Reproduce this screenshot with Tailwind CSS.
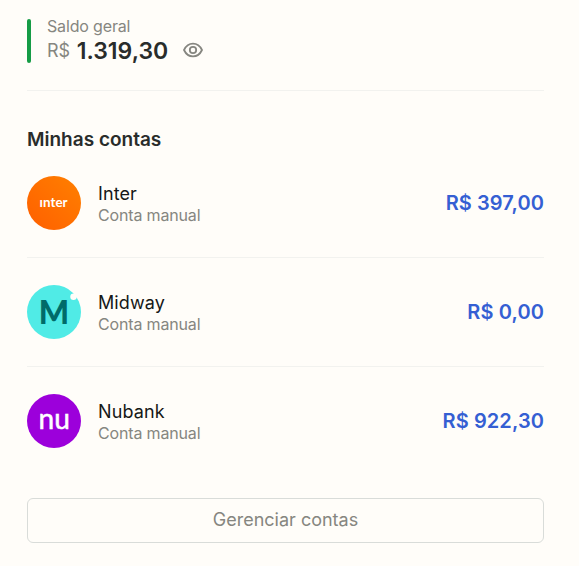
<!DOCTYPE html>
<html lang="pt-BR">

<head>
  <meta charset="UTF-8">
  <meta name="viewport" content="width=device-width, initial-scale=1.0">
  <title>Minhas contas</title>
  <script src="https://cdn.jsdelivr.net/npm/@tailwindcss/browser@4"></script>
</head>

<body class="bg-[#fffdf9] font-['Inter',sans-serif] min-h-screen">

  <main class="pl-[27px] pr-[35px] pt-[19px]">

    <!-- Balance -->
    <section class="flex h-[72px] border-b border-[#f2f2ef]">
      <div class="w-1 h-11 rounded-xs bg-[#169c46]"></div>
      <div class="ml-4">
        <p class="text-base leading-[15px] tracking-[-0.16px] text-[#868680]">Saldo geral</p>
        <div class="flex items-center h-[33px]">
          <span class="text-lg tracking-[-0.2px] text-[#868680]">R$</span>
          <span class="ml-[7px] text-[23px] leading-8 font-semibold text-[#292c2b]">1.319,30</span>
          <button class="ml-[15px]" aria-label="Ocultar saldo">
            <svg class="w-5 h-4 block -mt-[2px]" viewBox="0 0 20 16" fill="none" stroke="#868680" stroke-width="1.8">
              <path d="M1 8C3 3.8 6.2 1.6 10 1.6S17 3.8 19 8c-2 4.2-5.2 6.4-9 6.4S3 12.2 1 8Z" stroke-linejoin="round" />
              <circle cx="10" cy="8" r="3.2" />
            </svg>
          </button>
        </div>
      </div>
    </section>

    <!-- Accounts -->
    <h2 class="mt-[35px] text-[19px] leading-7 font-semibold text-[#292c2b]">Minhas contas</h2>

    <ul class="-mt-[5px]">
      <li class="flex items-center h-[109px] border-b border-[#f2f2ef]">
        <svg class="w-[54px] h-[54px]" viewBox="0 0 54 54">
          <defs>
            <linearGradient id="orange" x1="0" y1="1" x2="1" y2="0">
              <stop offset="0" stop-color="#ff5f00" />
              <stop offset="1" stop-color="#ff8000" />
            </linearGradient>
          </defs>
          <circle cx="27" cy="27" r="27" fill="url(#orange)" />
          <text x="12.6" y="31" font-family="Lato" font-size="13" font-weight="700" fill="#fff" textLength="28" lengthAdjust="spacingAndGlyphs">ınter</text>
        </svg>
        <div class="ml-[17px] pt-[3px] flex-1">
          <p class="text-lg leading-[22px] tracking-[0.1px] text-[#161817]">Inter</p>
          <p class="text-base leading-[21px] tracking-[-0.16px] text-[#868680]">Conta manual</p>
        </div>
        <span class="text-xl font-semibold tracking-[0.1px] text-[#355fd3]">R$ 397,00</span>
      </li>
      <li class="flex items-center h-[109px] border-b border-[#f2f2ef]">
        <svg class="w-[54px] h-[54px]" viewBox="0 0 54 54">
          <circle cx="27" cy="27" r="27" fill="#50ebe6" />
          <circle cx="46.5" cy="11.8" r="3.2" fill="#fffdf9" />
          <circle cx="50.5" cy="10" r="2.6" fill="#fffdf9" />
          <text x="11.8" y="39" font-family="Lato" font-size="33" font-weight="900" fill="#006b69" textLength="30.4" lengthAdjust="spacingAndGlyphs">M</text>
        </svg>
        <div class="ml-[17px] pt-[3px] flex-1">
          <p class="text-lg leading-[22px] tracking-[0.1px] text-[#161817]">Midway</p>
          <p class="text-base leading-[21px] tracking-[-0.16px] text-[#868680]">Conta manual</p>
        </div>
        <span class="text-xl font-semibold tracking-[0.1px] text-[#355fd3]">R$ 0,00</span>
      </li>
      <li class="flex items-center h-[108px]">
        <svg class="w-[54px] h-[54px]" viewBox="0 0 54 54">
          <circle cx="27" cy="27" r="27" fill="#9c00db" />
          <text x="11.5" y="34.6" font-family="Lato" font-size="28.5" font-weight="400" stroke="#fff" stroke-width=".5" fill="#fff" textLength="31.4" lengthAdjust="spacingAndGlyphs">nu</text>
        </svg>
        <div class="ml-[17px] pt-[3px] flex-1">
          <p class="text-lg leading-[22px] tracking-[0.1px] text-[#161817]">Nubank</p>
          <p class="text-base leading-[21px] tracking-[-0.16px] text-[#868680]">Conta manual</p>
        </div>
        <span class="text-xl font-semibold tracking-[0.1px] text-[#355fd3]">R$ 922,30</span>
      </li>
    </ul>

    <button class="mt-[23px] pb-px w-full h-[45px] block rounded-md border border-[#d9dcd9] text-lg leading-6 text-[#868680]">Gerenciar contas</button>

  </main>

</body>

</html>
